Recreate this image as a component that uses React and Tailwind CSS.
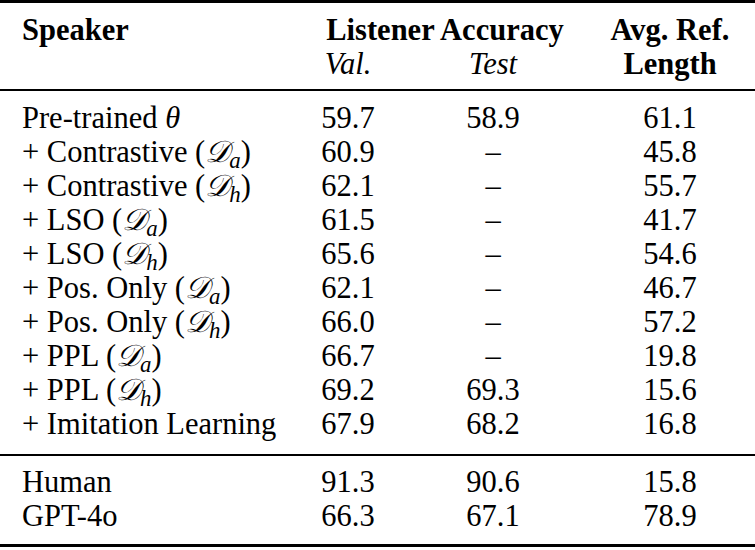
import React from "react";

// Calligraphic D with a math-italic subscript, as in (𝒟_a)
const D = ({ sub }) => (
  <>
    (<span className="italic">𝒟</span>
    <sub className="italic">{sub}</sub>)
  </>
);

const methods = [
  { name: <>Pre-trained <i>θ</i></>, val: "59.7", test: "58.9", len: "61.1" },
  { name: <>+ Contrastive <D sub="a" /></>, val: "60.9", test: "–", len: "45.8" },
  { name: <>+ Contrastive <D sub="h" /></>, val: "62.1", test: "–", len: "55.7" },
  { name: <>+ LSO <D sub="a" /></>, val: "61.5", test: "–", len: "41.7" },
  { name: <>+ LSO <D sub="h" /></>, val: "65.6", test: "–", len: "54.6" },
  { name: <>+ Pos. Only <D sub="a" /></>, val: "62.1", test: "–", len: "46.7" },
  { name: <>+ Pos. Only <D sub="h" /></>, val: "66.0", test: "–", len: "57.2" },
  { name: <>+ PPL <D sub="a" /></>, val: "66.7", test: "–", len: "19.8" },
  { name: <>+ PPL <D sub="h" /></>, val: "69.2", test: "69.3", len: "15.6" },
  { name: "+ Imitation Learning", val: "67.9", test: "68.2", len: "16.8" },
];

const baselines = [
  { name: "Human", val: "91.3", test: "90.6", len: "15.8" },
  { name: "GPT-4o", val: "66.3", test: "67.1", len: "78.9" },
];

const cols = "grid grid-cols-[300px_96px_194px_160px]";

const Row = ({ row }) => (
  <div className={`${cols} leading-[34px]`}>
    <div className="pl-[22px] whitespace-nowrap">{row.name}</div>
    <div className="text-center">{row.val}</div>
    <div className="text-center">{row.test}</div>
    <div className="text-center">{row.len}</div>
  </div>
);

export default function App() {
  return (
    <div className="w-[755px] h-[550px] bg-white text-black font-[family-name:Liberation_Serif,Times_New_Roman,serif] text-[30.5px]">
      {/* Header */}
      <div className={`${cols} border-t-[3px] border-black pt-[10px] pb-[8px] leading-[34px]`}>
        <div className="pl-[22px] font-bold">Speaker</div>
        <div className="col-span-2 text-center font-bold whitespace-nowrap">Listener Accuracy</div>
        <div className="text-center font-bold whitespace-nowrap">Avg. Ref.</div>
        <div></div>
        <div className="text-center italic">Val.</div>
        <div className="text-center italic">Test</div>
        <div className="text-center font-bold">Length</div>
      </div>

      {/* Methods */}
      <div className="border-t-2 border-black pt-[10px] pb-[13px]">
        {methods.map((row, i) => (
          <Row key={i} row={row} />
        ))}
      </div>

      {/* Reference speakers */}
      <div className="border-t-2 border-b-[3px] border-black pt-[9px] pb-[11px]">
        {baselines.map((row) => (
          <Row key={row.name} row={row} />
        ))}
      </div>
    </div>
  );
}
